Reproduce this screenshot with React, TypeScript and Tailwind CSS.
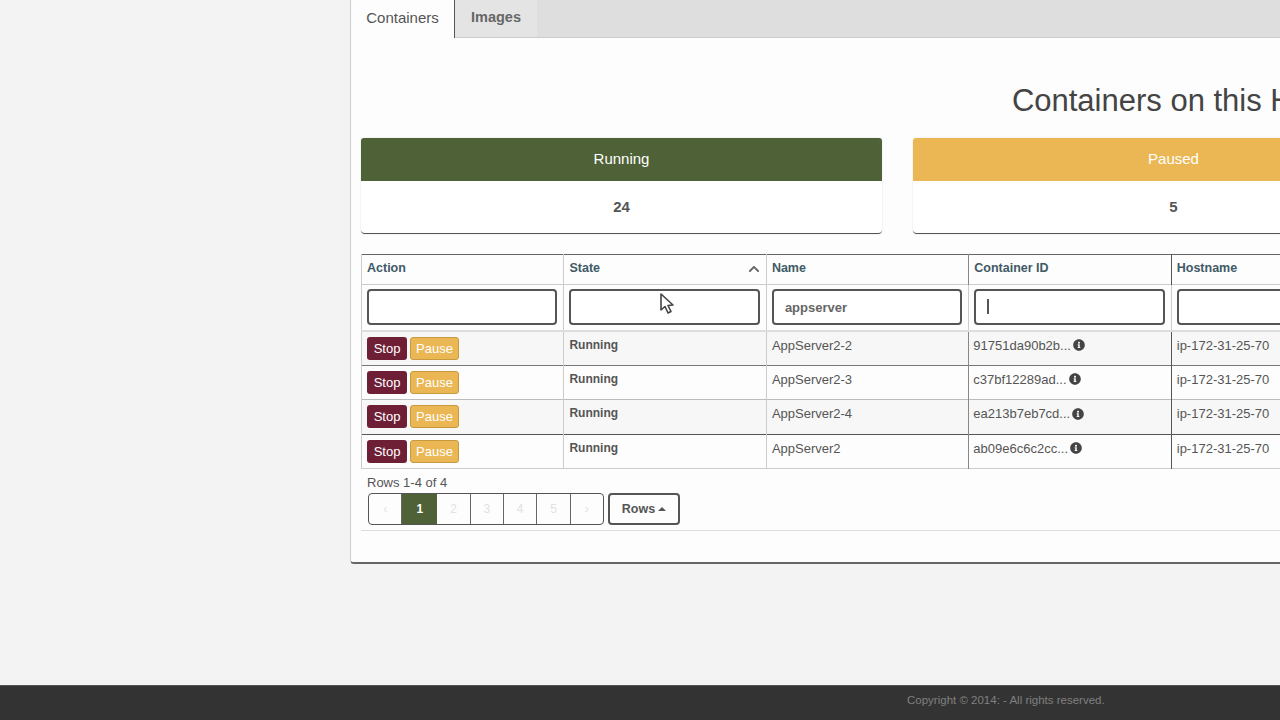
import { FaChevronUp, FaInfoCircle } from "react-icons/fa";

const rows = [
  { name: "AppServer2-2", id: "91751da90b2b...", line: "border-b-[#777]", striped: true },
  { name: "AppServer2-3", id: "c37bf12289ad...", line: "border-b-[#bbb]", striped: false },
  { name: "AppServer2-4", id: "ea213b7eb7cd...", line: "border-b-[#555]", striped: true },
  { name: "AppServer2", id: "ab09e6c6c2cc...", line: "border-b-[#ccc]", striped: false },
];

const columns = ["Action", "State", "Name", "Container ID", "Hostname", "Image", "Ports", "Created"];
const pages = ["‹", "1", "2", "3", "4", "5", "›"];

function StatCard({ title, value, color }: { title: string; value: string; color: string }) {
  return (
    <div className="w-[521px] shrink-0 h-[96px] flex flex-col rounded-[4px] bg-white border-b border-b-[#555] shadow-[0_0_2px_rgba(0,0,0,0.12)]">
      <div className={`h-[43px] flex items-center justify-center rounded-t-[3px] text-white text-[15px] ${color}`}>
        {title}
      </div>
      <div className="flex-1 flex items-center justify-center text-[15px] font-bold text-[#555]">{value}</div>
    </div>
  );
}

function Filter({ value, caret }: { value?: string; caret?: boolean }) {
  return (
    <div className="relative h-[36px] -ml-[1px]">
      <input
        readOnly
        value={value ?? ""}
        className="w-full h-full border-2 border-[#555] rounded-[4px] bg-white pl-[11px] text-[13px] font-bold text-[#666] outline-none"
      />
      {caret && <span className="absolute left-[13px] top-[10px] w-[2px] h-[15px] bg-[#555]" />}
    </div>
  );
}

export default function App() {
  return (
    <div className="relative w-[1280px] h-[720px] overflow-hidden flex flex-col bg-[#f3f3f3] font-['Liberation_Sans',Arial,sans-serif]">
      <main className="flex-1 pl-[350px] min-h-0">
        <div className="w-[1645px] h-[564px] bg-[#fdfdfd] border-l border-l-[#ccc] border-b-2 border-b-[#666] rounded-bl-[4px]">
          <div className="h-[38px] flex bg-[#dedede] border-b border-b-[#ccc]">
            <div className="w-[104px] h-[38px] bg-[#fdfdfd] border-r border-r-[#555] flex items-center justify-center text-[15px] text-[#555] pb-[2px]">
              Containers
            </div>
            <div className="w-[82px] flex items-center justify-center text-[14.5px] font-bold text-[#666] bg-[#e4e4e4] pb-[1px]">
              Images
            </div>
          </div>

          <div className="pl-[10px]">
            <h1 className="h-[100px] w-[1624px] flex items-center justify-center text-[31px] text-[#444] pt-[26px]">
              Containers on this Host
            </h1>
            <div className="flex gap-[31px]">
              <StatCard title="Running" value="24" color="bg-[#4f6237]" />
              <StatCard title="Paused" value="5" color="bg-[#ebb755]" />
              <StatCard title="Stopped" value="0" color="bg-[#6e1f36]" />
            </div>

            <div className="w-[1620px] mt-[20px] h-[277px] border-b border-b-[#ddd]">
              <table className="w-full table-fixed border-collapse text-[13px] leading-[15px]">
                <thead>
                  <tr className="h-[30px] border-t border-t-[#666] border-b border-b-[#ccc]">
                    {columns.map((c, i) => (
                      <th
                        key={c}
                        className={`px-[5px] pb-[2px] text-left text-[12.5px] font-bold text-[#3f5a66] border-l border-[#ccc] ${i === 3 ? "border-l-[#888]" : ""} ${i === 4 ? "border-l-[#555]" : ""}`}
                      >
                        <div className="flex items-center justify-between">
                          {c}
                          {c === "State" && <FaChevronUp className="w-[14px] h-[12px] text-[#666]" />}
                        </div>
                      </th>
                    ))}
                  </tr>
                  <tr className="h-[46px] border-b-2 border-b-[#ddd]">
                    {columns.map((c, i) => (
                      <td key={c} className="px-[6px] border-l border-[#ccc]">
                        <Filter value={i === 2 ? "appserver" : undefined} caret={i === 3} />
                      </td>
                    ))}
                  </tr>
                </thead>
                <tbody>
                  {rows.map((r) => (
                    <tr key={r.name} className={`h-[34.5px] border-b ${r.line} ${r.striped ? "bg-[#f7f7f7]" : "bg-[#fdfdfd]"}`}>
                      <td className="px-[5px] border-l border-l-[#ccc] align-top pt-[5px]">
                        <div className="flex gap-[3px]">
                          <button className="w-[40px] h-[23px] rounded-[3px] bg-[#6e1f36] text-white text-[13px]">Stop</button>
                          <button className="w-[49px] h-[23px] rounded-[3px] bg-[#ebb755] border border-[#c79a3e] text-white text-[13px]">Pause</button>
                        </div>
                      </td>
                      <td className="px-[5px] border-l border-l-[#ccc] align-top pt-[6px] text-[12px] font-bold text-[#555]">Running</td>
                      <td className="px-[5px] border-l border-l-[#ccc] align-top pt-[6px] text-[#555]">{r.name}</td>
                      <td className="pl-[4px] pr-[5px] border-l border-l-[#888] align-top pt-[6px] text-[#555]">
                        <span className="flex items-center gap-[2px] h-[15px]">
                          {r.id}
                          <FaInfoCircle className="w-[12px] h-[12px] text-[#444]" />
                        </span>
                      </td>
                      <td className="px-[5px] border-l border-l-[#555] align-top pt-[6px] text-[#555]">ip-172-31-25-70</td>
                      <td className="border-l border-l-[#ccc]" />
                      <td className="border-l border-l-[#ccc]" />
                      <td className="border-l border-l-[#ccc]" />
                    </tr>
                  ))}
                </tbody>
              </table>

              <div className="pl-[6px] pt-[6px] text-[13px] leading-[16px] text-[#555]">Rows 1-4 of 4</div>
              <div className="flex gap-[4px] pl-[7px] pt-[2px]">
                <div className="flex h-[32px] w-[236px] border border-[#555] rounded-[4px] overflow-hidden">
                  {pages.map((p) =>
                    p === "1" ? (
                      <span key={p} className="w-[35px] flex items-center justify-center bg-[#4f6237] text-white text-[12px] font-bold">
                        {p}
                      </span>
                    ) : (
                      <span key={p} className="flex-1 flex items-center justify-center border-r border-r-[#666] last:border-r-0 text-[#e2e2e2] text-[12px]">
                        {p}
                      </span>
                    ),
                  )}
                </div>
                <button className="w-[72px] h-[32px] border-2 border-[#555] rounded-[4px] text-[12.5px] text-[#555] font-bold flex items-center justify-center gap-[3px]">
                  Rows
                  <span className="border-x-[4px] border-x-transparent border-b-[4px] border-b-[#555]" />
                </button>
              </div>
            </div>
          </div>
        </div>
      </main>

      <footer className="h-[35px] shrink-0 bg-[#333] border-t border-t-[#555] flex items-center pl-[907px] pb-[5px] text-[11.5px] text-[#808080]">
        Copyright © 2014: - All rights reserved.
      </footer>

      {/* mouse pointer over the state filter */}
      <svg className="absolute left-[660px] top-[293px] w-[15px] h-[22px]" viewBox="0 0 15 22">
        <path d="M1 1 L1 17 L5 13.5 L8 20 L11 18.5 L8 12.5 L13 12 Z" fill="#fff" stroke="#444" strokeWidth="1.6" strokeLinejoin="round" />
      </svg>
    </div>
  );
}
